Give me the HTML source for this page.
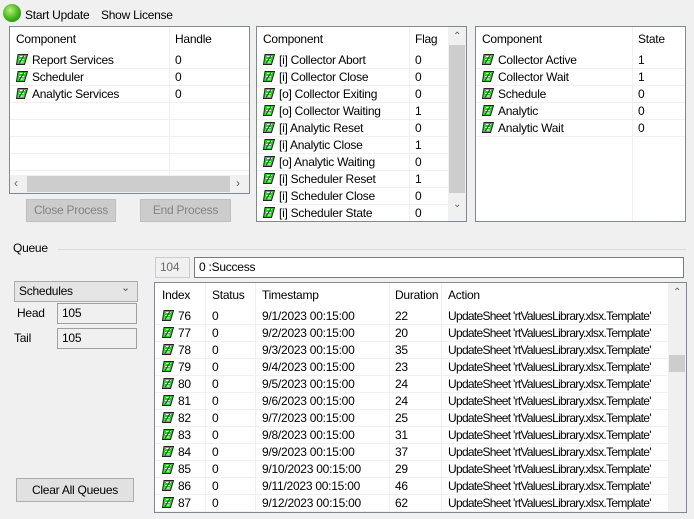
<!DOCTYPE html>
<html><head><style>
*{box-sizing:border-box;margin:0;padding:0}
body{width:694px;height:519px;background:#f0f0f0;font-family:"Liberation Sans",sans-serif;font-size:12px;letter-spacing:-0.25px;color:#000;position:relative;overflow:hidden}
.a{position:absolute}
.panel{position:absolute;background:#fff;border:1px solid #828790}
.row{position:absolute;left:0;height:17px;border-bottom:1px solid #f0f0f0;white-space:nowrap;line-height:16px}
.hdr{position:absolute;top:0;left:0;height:26px;line-height:24px;white-space:nowrap}
.c{position:absolute;top:0}
.vd{position:absolute;top:0;width:1px;background:#f0f0f0}
.ic{display:inline-block;width:12px;height:11px;vertical-align:-1px;margin-right:4px}
.btn{position:absolute;border:1px solid #adadad;background:#e1e1e1;text-align:center;line-height:20px}
.dis{background:#cccccc;border-color:#bfbfbf;color:#838383}
.box{position:absolute;border:1px solid #7a7a7a;background:#fff;padding-left:4px;line-height:18px}
.act{letter-spacing:-0.7px}
</style></head><body>
<svg width="0" height="0" style="position:absolute"><defs>
<symbol id="z" viewBox="0 0 12 11"><path d="M2 .5h9.5l-3 10H.5z" fill="#3c3" stroke="#222" stroke-width="1"/><path d="M4 2.5h5M3 5.5h5M2.5 8h5" stroke="#fff" stroke-width="1"/><path d="M8 1.5L3 9.5" stroke="#1a5c1a" stroke-width="1.2"/></symbol>
</defs></svg>

<div class="a" style="left:3px;top:4px;width:18px;height:18px;border-radius:50%;background:radial-gradient(circle at 40% 35%,#b6f07a,#3fb21a 55%,#1f7a0a)"></div>
<div class="a" style="left:25px;top:8px">Start Update</div>
<div class="a" style="left:101px;top:8px">Show License</div>

<div class="panel" style="left:9px;top:26px;width:241px;height:168px">
<div class="vd" style="left:159px;height:148px"></div>
<div class="hdr" style="left:6px">Component</div><div class="hdr" style="left:165px">Handle</div>
<div class="row" style="top:25px;width:239px"><span class="c" style="left:6px"><svg class="ic"><use href="#z"/></svg>Report Services</span><span class="c" style="left:165px">0</span></div>
<div class="row" style="top:42px;width:239px"><span class="c" style="left:6px"><svg class="ic"><use href="#z"/></svg>Scheduler</span><span class="c" style="left:165px">0</span></div>
<div class="row" style="top:59px;width:239px"><span class="c" style="left:6px"><svg class="ic"><use href="#z"/></svg>Analytic Services</span><span class="c" style="left:165px">0</span></div>
<div class="row" style="top:76px;width:239px"></div>
<div class="row" style="top:93px;width:239px"></div>
<div class="row" style="top:110px;width:239px"></div>
<div class="row" style="top:127px;width:239px"></div>
<div class="a" style="left:0;top:148px;width:239px;height:18px;background:#f0f0f0"><div class="a" style="left:17px;top:1px;width:203px;height:16px;background:#cdcdcd"></div><span class="a" style="left:4px;top:1px;color:#606060">&lsaquo;</span><span class="a" style="left:226px;top:1px;color:#606060">&rsaquo;</span></div>
</div>
<div class="btn dis" style="left:26px;top:199px;width:90px;height:23px">Close Process</div>
<div class="btn dis" style="left:140px;top:199px;width:91px;height:23px">End Process</div>

<div class="panel" style="left:256px;top:26px;width:211px;height:196px">
<div class="vd" style="left:152px;height:194px"></div>
<div class="hdr" style="left:6px">Component</div><div class="hdr" style="left:158px">Flag</div>
<div class="row" style="top:25px;width:191px"><span class="c" style="left:6px"><svg class="ic"><use href="#z"/></svg>[i] Collector Abort</span><span class="c" style="left:158px">0</span></div>
<div class="row" style="top:42px;width:191px"><span class="c" style="left:6px"><svg class="ic"><use href="#z"/></svg>[i] Collector Close</span><span class="c" style="left:158px">0</span></div>
<div class="row" style="top:59px;width:191px"><span class="c" style="left:6px"><svg class="ic"><use href="#z"/></svg>[o] Collector Exiting</span><span class="c" style="left:158px">0</span></div>
<div class="row" style="top:76px;width:191px"><span class="c" style="left:6px"><svg class="ic"><use href="#z"/></svg>[o] Collector Waiting</span><span class="c" style="left:158px">1</span></div>
<div class="row" style="top:93px;width:191px"><span class="c" style="left:6px"><svg class="ic"><use href="#z"/></svg>[i] Analytic Reset</span><span class="c" style="left:158px">0</span></div>
<div class="row" style="top:110px;width:191px"><span class="c" style="left:6px"><svg class="ic"><use href="#z"/></svg>[i] Analytic Close</span><span class="c" style="left:158px">1</span></div>
<div class="row" style="top:127px;width:191px"><span class="c" style="left:6px"><svg class="ic"><use href="#z"/></svg>[o] Analytic Waiting</span><span class="c" style="left:158px">0</span></div>
<div class="row" style="top:144px;width:191px"><span class="c" style="left:6px"><svg class="ic"><use href="#z"/></svg>[i] Scheduler Reset</span><span class="c" style="left:158px">1</span></div>
<div class="row" style="top:161px;width:191px"><span class="c" style="left:6px"><svg class="ic"><use href="#z"/></svg>[i] Scheduler Close</span><span class="c" style="left:158px">0</span></div>
<div class="row" style="top:178px;width:191px;border:0"><span class="c" style="left:6px"><svg class="ic"><use href="#z"/></svg>[i] Scheduler State</span><span class="c" style="left:158px">0</span></div>
<div class="a" style="left:191px;top:0;width:18px;height:194px;background:#f0f0f0"><div class="a" style="left:1px;top:18px;width:16px;height:148px;background:#cdcdcd"></div><span class="a" style="left:5px;top:4px;color:#606060;font-size:10px">&#8963;</span><span class="a" style="left:5px;top:172px;color:#606060;font-size:10px">&#8964;</span></div>
</div>

<div class="panel" style="left:475px;top:26px;width:211px;height:196px">
<div class="vd" style="left:156px;height:194px"></div>
<div class="hdr" style="left:6px">Component</div><div class="hdr" style="left:162px">State</div>
<div class="row" style="top:25px;width:209px"><span class="c" style="left:6px"><svg class="ic"><use href="#z"/></svg>Collector Active</span><span class="c" style="left:162px">1</span></div>
<div class="row" style="top:42px;width:209px"><span class="c" style="left:6px"><svg class="ic"><use href="#z"/></svg>Collector Wait</span><span class="c" style="left:162px">1</span></div>
<div class="row" style="top:59px;width:209px"><span class="c" style="left:6px"><svg class="ic"><use href="#z"/></svg>Schedule</span><span class="c" style="left:162px">0</span></div>
<div class="row" style="top:76px;width:209px"><span class="c" style="left:6px"><svg class="ic"><use href="#z"/></svg>Analytic</span><span class="c" style="left:162px">0</span></div>
<div class="row" style="top:93px;width:209px"><span class="c" style="left:6px"><svg class="ic"><use href="#z"/></svg>Analytic Wait</span><span class="c" style="left:162px">0</span></div>
</div>

<div class="a" style="left:13px;top:241px">Queue</div>
<div class="a" style="left:58px;top:249px;width:628px;height:1px;background:#dcdcdc"></div>
<div class="box" style="left:155px;top:257px;width:35px;height:21px;border-color:#ccc;background:#f0f0f0;color:#6d6d6d">104</div>
<div class="box" style="left:194px;top:257px;width:490px;height:21px">0 :Success</div>
<div class="box" style="left:14px;top:281px;width:124px;height:21px;background:#e5e5e5;border-color:#acacac">Schedules<span class="a" style="left:106px;top:-3px;color:#555;font-size:11px">&#8964;</span></div>
<div class="a" style="left:17px;top:306px">Head</div>
<div class="box" style="left:57px;top:303px;width:80px;height:21px;background:#f0f0f0;border-color:#a0a0a0">105</div>
<div class="a" style="left:14px;top:331px">Tail</div>
<div class="box" style="left:57px;top:328px;width:80px;height:21px;background:#f0f0f0;border-color:#a0a0a0">105</div>
<div class="btn" style="left:16px;top:478px;width:118px;height:24px;line-height:22px">Clear All Queues</div>

<div class="panel" style="left:154px;top:282px;width:533px;height:231px;overflow:hidden">
<div class="vd" style="left:50px;height:229px"></div><div class="vd" style="left:100px;height:229px"></div><div class="vd" style="left:234px;height:229px"></div><div class="vd" style="left:286px;height:229px"></div>
<div class="hdr" style="left:7px">Index</div><div class="hdr" style="left:57px">Status</div><div class="hdr" style="left:107px">Timestamp</div><div class="hdr" style="left:240px">Duration</div><div class="hdr" style="left:293px">Action</div>
<div id="rows"></div>
<div class="a" style="left:513px;top:0;width:18px;height:229px;background:#f0f0f0"><div class="a" style="left:1px;top:72px;width:16px;height:17px;background:#cdcdcd"></div><span class="a" style="left:5px;top:4px;color:#606060;font-size:10px">&#8963;</span></div>
</div>
<script>
var d=[22,20,35,23,24,24,25,31,37,29,46,62],h='';
for(var i=0;i<12;i++){var n=76+i,t=25+i*17;
h+='<div class="row" style="top:'+t+'px;width:513px"><span class="c" style="left:7px"><svg class="ic"><use href="#z"/></svg>'+n+'</span><span class="c" style="left:57px">0</span><span class="c" style="left:107px">9/'+(1+i)+'/2023 00:15:00</span><span class="c" style="left:240px">'+d[i]+'</span><span class="c act" style="left:293px">UpdateSheet \'rtValuesLibrary.xlsx.Template\'</span></div>';}
document.getElementById('rows').innerHTML=h;
</script>
</body></html>
